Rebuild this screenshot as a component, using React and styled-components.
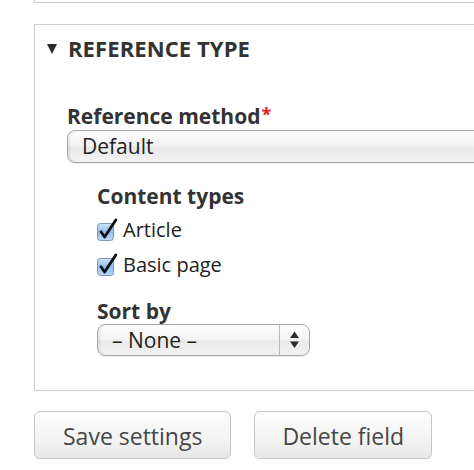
import React from 'react';
import styled, { createGlobalStyle } from 'styled-components';

const GlobalStyle = createGlobalStyle`
  html, body {
    margin: 0;
    padding: 0;
    background: #ffffff;
    overflow: hidden;
  }
  body {
    font-family: 'Open Sans', 'Noto Sans', 'DejaVu Sans', sans-serif;
    color: #333333;
  }
`;

const Page = styled.div`
  width: 900px;
  padding-left: 34px;
`;

const PrevFieldset = styled.div`
  height: 2px;
  border: 1px solid #cccccc;
  border-top: none;
`;

const Fieldset = styled.fieldset`
  margin: 21px 0 0 0;
  padding: 8px 0 34px 0;
  border: 1px solid #cccccc;
  min-width: 0;
`;

const Legend = styled.div`
  display: flex;
  align-items: center;
  gap: 11px;
  padding-left: 12px;
  font-size: 22px;
  line-height: 30px;
  font-weight: 700;
  color: #333333;
  letter-spacing: 0.1px;
`;

const Triangle = styled.span`
  width: 0;
  height: 0;
  border-left: 5.5px solid transparent;
  border-right: 5.5px solid transparent;
  border-top: 10px solid #2b2b2b;
  margin-top: 2px;
`;

const FormBody = styled.div`
  margin-left: 32px;
  margin-top: 38px;
`;

const Label = styled.div`
  font-size: 21px;
  font-weight: 700;
  line-height: ${(p) => p.$lh || 26}px;
  color: #333333;
  margin-top: ${(p) => p.$top || 0}px;
  margin-bottom: ${(p) => p.$bottom || 0}px;
`;

const Required = styled.span`
  color: #e01b1b;
  font-size: 18px;
  vertical-align: 3px;
  margin-left: 1px;
`;

const SubGroup = styled.div`
  margin-left: 30px;
`;

const Select = styled.div`
  box-sizing: border-box;
  display: flex;
  align-items: center;
  width: ${(p) => p.$width}px;
  height: ${(p) => p.$height}px;
  padding-left: ${(p) => p.$pad}px;
  border: 1px solid #a9a9a9;
  border-radius: 8px;
  background: linear-gradient(to bottom, #fefefe 0%, #f4f4f4 45%, #e9e9e9 55%, #f3f3f3 100%);
  box-shadow: inset 2px 0 2px rgba(0, 0, 0, 0.08), 0 1px 1px rgba(0, 0, 0, 0.08);
  font-size: 21px;
  line-height: ${(p) => p.$height - 2}px;
  color: #222222;
`;

const SelectText = styled.span`
  flex: 1;
`;

const ArrowBox = styled.span`
  display: flex;
  align-items: center;
  justify-content: center;
  width: 29px;
  height: 100%;
  border-left: 1px solid #b9b9b9;
`;

const CheckList = styled.div`
  margin-top: 3px;
`;

const CheckRow = styled.label`
  display: flex;
  align-items: center;
  gap: 5px;
  height: 35px;
  font-size: 20px;
  color: #222222;
`;

const Buttons = styled.div`
  display: flex;
  gap: 23px;
  margin-top: 20px;
`;

const Button = styled.button`
  box-sizing: border-box;
  height: 48px;
  padding: 3px ${(p) => p.$pad}px 0;
  border: 1px solid #c6c6c6;
  border-radius: 6px;
  background: linear-gradient(to bottom, #fdfdfd 0%, #f3f3f3 60%, #e7e7e7 100%);
  box-shadow: 0 1px 1px rgba(0, 0, 0, 0.06);
  font-family: 'Open Sans', 'Noto Sans', 'DejaVu Sans', sans-serif;
  font-size: 23px;
  line-height: 43px;
  color: #474747;
  cursor: pointer;
`;

function CheckIcon() {
  return (
    <svg width="21" height="23" viewBox="0 0 21 23">
      <defs>
        <linearGradient id="cbfill" x1="0" y1="0" x2="0" y2="1">
          <stop offset="0" stopColor="#cfe4fb" />
          <stop offset="0.5" stopColor="#8fbdf0" />
          <stop offset="1" stopColor="#bcd9f7" />
        </linearGradient>
      </defs>
      <rect x="0.5" y="5.5" width="16" height="17" rx="3" fill="url(#cbfill)" stroke="#7e93ad" />
      <path d="M4 13.8 L7.6 19 L18.8 2" fill="none" stroke="#0d0d14" strokeWidth="2.8" strokeLinecap="round" strokeLinejoin="round" />
    </svg>
  );
}

function UpDownArrows() {
  return (
    <svg width="11" height="18" viewBox="0 0 11 18">
      <path d="M5.5 0.5 L10 7 L1 7 Z" fill="#2a2a2a" />
      <path d="M1 10.5 L10 10.5 L5.5 17 Z" fill="#2a2a2a" />
    </svg>
  );
}

export default function App() {
  return (
    <Page>
      <GlobalStyle />
      <PrevFieldset />
      <Fieldset>
        <Legend>
          <Triangle />
          REFERENCE TYPE
        </Legend>
        <FormBody>
          <Label $bottom={1}>
            Reference method<Required>*</Required>
          </Label>
          <Select $width={520} $height={33} $pad={14}>
            <SelectText>Default</SelectText>
          </Select>

          <SubGroup>
            <Label $top={20}>Content types</Label>
            <CheckList>
              <CheckRow>
                <CheckIcon />
                Article
              </CheckRow>
              <CheckRow>
                <CheckIcon />
                Basic page
              </CheckRow>
            </CheckList>

            <Label $top={17} $lh={25}>Sort by</Label>
            <Select $width={213} $height={32} $pad={14}>
              <SelectText>– None –</SelectText>
              <ArrowBox>
                <UpDownArrows />
              </ArrowBox>
            </Select>
          </SubGroup>
        </FormBody>
      </Fieldset>
      <Buttons>
        <Button $pad={28}>Save settings</Button>
        <Button $pad={27}>Delete field</Button>
      </Buttons>
    </Page>
  );
}
